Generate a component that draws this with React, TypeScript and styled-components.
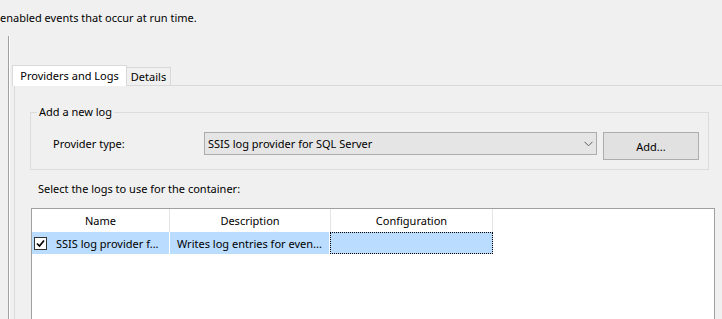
import styled, { createGlobalStyle } from "styled-components";

const GlobalStyle = createGlobalStyle`
  html, body {
    margin: 0;
    padding: 0;
    background: #f0f0f0;
  }
  body {
    font-family: "Noto Sans", "Liberation Sans", sans-serif;
    font-size: 11px;
    color: #000;
    overflow: hidden;
  }
`;

const Root = styled.div`
  width: 722px;
  height: 319px;
  overflow: hidden;
`;

const Intro = styled.div`
  box-sizing: border-box;
  height: 36px;
  padding-top: 10px;
  line-height: 16px;
  white-space: nowrap;
`;

const Frame = styled.div`
  box-sizing: border-box;
  height: 283px;
  margin-left: 8px;
  padding: 29px 0 0 5px;
  border-left: 1px solid #a0a0a0;
  box-shadow: inset 1px 0 0 #fff;
`;

const TabStrip = styled.div`
  position: relative;
  z-index: 1;
  display: flex;
  align-items: flex-end;
  height: 21px;
  margin-left: -2px;
`;

const Tab = styled.div<{ $active?: boolean; $w: number }>`
  box-sizing: border-box;
  display: flex;
  align-items: center;
  justify-content: center;
  width: ${(p) => p.$w}px;
  height: ${(p) => (p.$active ? 21 : 18)}px;
  margin-bottom: ${(p) => (p.$active ? 0 : 1)}px;
  padding-bottom: ${(p) => (p.$active ? 1 : 0)}px;
  border: 1px solid #d9d9d9;
  border-bottom: none;
  border-left: ${(p) => (p.$active ? "1px solid #d9d9d9" : "none")};
  background: ${(p) => (p.$active ? "#fff" : "#f0f0f0")};
  white-space: nowrap;
`;

const Panel = styled.div`
  box-sizing: border-box;
  height: 300px;
  margin-top: -1px;
  padding: 18px 0 0 15px;
  border-top: 1px solid #d9d9d9;
  border-left: 1px solid #d9d9d9;
  background: #f0f0f0;
`;

const Group = styled.fieldset`
  box-sizing: border-box;
  width: 679px;
  min-width: 0;
  margin: 0;
  padding: 12px 9px 9px 22px;
  border: 1px solid #dcdcdc;
`;

const Legend = styled.legend`
  margin-left: -16px;
  padding: 0 2px;
  line-height: 16px;
`;

const FieldRow = styled.div`
  display: flex;
  align-items: flex-start;
`;

const FieldLabel = styled.div`
  width: 151px;
  line-height: 23px;
  white-space: nowrap;
`;

const Combo = styled.div`
  box-sizing: border-box;
  display: flex;
  align-items: center;
  justify-content: space-between;
  width: 393px;
  height: 23px;
  margin-right: 6px;
  padding: 0 3px 0 3px;
  border: 1px solid #acacac;
  background: #e5e5e5;
  white-space: nowrap;
`;

const Chevron = styled.svg`
  width: 9px;
  height: 6px;
  flex: none;
`;

const Button = styled.button`
  box-sizing: border-box;
  width: 96px;
  height: 28px;
  padding: 0;
  border: 1px solid #adadad;
  background: #e1e1e1;
  font: inherit;
  color: #000;
`;

const Caption = styled.div`
  margin: 11px 0 0 8px;
  line-height: 16px;
  white-space: nowrap;
`;

const List = styled.div`
  box-sizing: border-box;
  width: 684px;
  height: 200px;
  margin: 11px 0 0 1px;
  border: 1px solid #a0a0a0;
  background: #fff;
`;

const HeaderRow = styled.div`
  display: flex;
  height: 23px;
`;

const HeaderCell = styled.div<{ $w: number }>`
  box-sizing: border-box;
  display: flex;
  align-items: center;
  justify-content: center;
  width: ${(p) => p.$w}px;
  border-right: 1px solid #e5e5e5;
  white-space: nowrap;
`;

const DataRow = styled.div`
  display: flex;
  height: 22px;
`;

const Cell = styled.div<{ $w: number; $focus?: boolean; $pad?: number }>`
  box-sizing: border-box;
  display: flex;
  align-items: center;
  width: ${(p) => p.$w}px;
  padding-left: ${(p) => p.$pad ?? 0}px;
  background: #b9dcff;
  border: ${(p) => (p.$focus ? "1px dotted #000" : "none")};
  border-right: ${(p) => (p.$focus ? "1px dotted #000" : "1px solid #fff")};
  white-space: nowrap;
  overflow: hidden;
`;

const CheckBox = styled.span`
  box-sizing: border-box;
  display: flex;
  align-items: center;
  justify-content: center;
  width: 13px;
  height: 13px;
  margin: 0 9px 0 2px;
  border: 1px solid #333;
  background: #fff;
  flex: none;
`;

export default function App() {
  return (
    <Root>
      <GlobalStyle />
      <Intro>enabled events that occur at run time.</Intro>
      <Frame>
        <TabStrip>
          <Tab $active $w={115}>
            Providers and Logs
          </Tab>
          <Tab $w={44}>Details</Tab>
        </TabStrip>
        <Panel>
          <Group>
            <Legend>Add a new log</Legend>
            <FieldRow>
              <FieldLabel>Provider type:</FieldLabel>
              <Combo>
                <span>SSIS log provider for SQL Server</span>
                <Chevron viewBox="0 0 9 6">
                  <polyline
                    points="0.5,0.8 4.5,4.8 8.5,0.8"
                    fill="none"
                    stroke="#606060"
                    strokeWidth="1"
                  />
                </Chevron>
              </Combo>
              <Button>Add...</Button>
            </FieldRow>
          </Group>

          <Caption>Select the logs to use for the container:</Caption>
          <List>
            <HeaderRow>
              <HeaderCell $w={138}>Name</HeaderCell>
              <HeaderCell $w={161}>Description</HeaderCell>
              <HeaderCell $w={162}>Configuration</HeaderCell>
            </HeaderRow>
            <DataRow>
              <Cell $w={138}>
                <CheckBox>
                  <svg width="9" height="9" viewBox="0 0 9 9">
                    <path
                      d="M1 4.5 L3.5 7 L8 1.5"
                      fill="none"
                      stroke="#000"
                      strokeWidth="1.7"
                    />
                  </svg>
                </CheckBox>
                SSIS log provider f...
              </Cell>
              <Cell $w={160} $pad={7}>
                Writes log entries for even...
              </Cell>
              <Cell $w={163} $focus />
            </DataRow>
          </List>
        </Panel>
      </Frame>
    </Root>
  );
}
